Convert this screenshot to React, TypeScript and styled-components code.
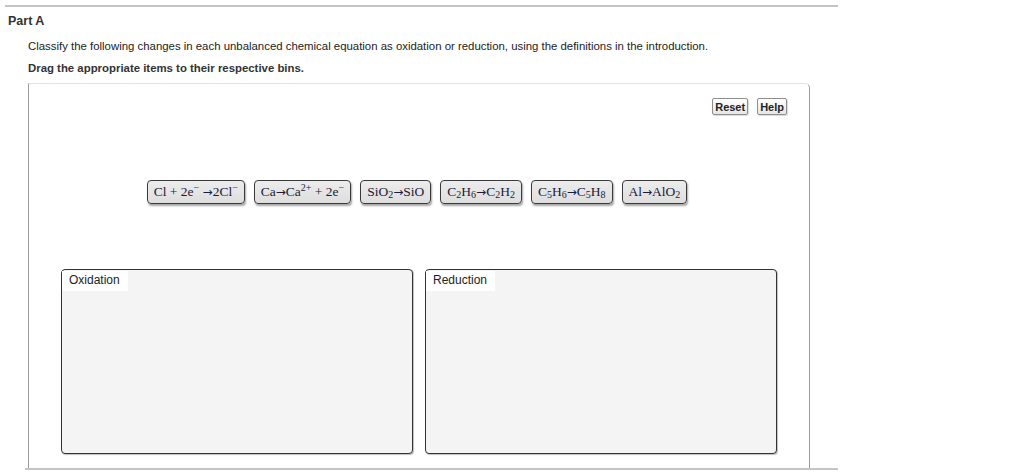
import React from "react";
import styled, { createGlobalStyle } from "styled-components";

const Global = createGlobalStyle`
  html, body { margin: 0; padding: 0; background: #fff; }
  body { font-family: "Liberation Sans", Arial, sans-serif; color: #222; }
`;

const Page = styled.div`
  width: 1021px;
  height: 474px;
  padding-top: 5px;
  box-sizing: border-box;
`;

const Rule = styled.div<{ $left: number; $width: number }>`
  margin-left: ${(p) => p.$left}px;
  width: ${(p) => p.$width}px;
  height: 2px;
  background: #c4c4c4;
`;

const PartTitle = styled.div`
  margin: 6px 0 0 8px;
  font-size: 12.5px;
  font-weight: bold;
  line-height: 16px;
  color: #333;
`;

const Body = styled.div`
  margin-left: 28px;
`;

const Instruction = styled.div`
  margin-top: 10px;
  font-size: 11.4px;
  line-height: 14px;
  color: #222;
`;

const Bold = styled.div`
  margin-top: 8px;
  font-size: 11.4px;
  line-height: 14px;
  font-weight: bold;
  color: #333;
`;

const Panel = styled.div`
  margin-top: 8px;
  width: 782px;
  box-sizing: border-box;
  border: 1px solid #9a9a9a;
  border-top-color: #e2e2e2;
  border-bottom: none;
  border-top-right-radius: 5px;
  padding: 14px 22px 14px 0;
  display: flex;
  flex-direction: column;
`;

const Toolbar = styled.div`
  display: flex;
  justify-content: flex-end;
  gap: 9px;
`;

const ToolButton = styled.button`
  height: 17px;
  padding: 0 2px;
  font-family: "Liberation Sans", Arial, sans-serif;
  font-size: 11px;
  font-weight: bold;
  color: #222;
  background: linear-gradient(#ffffff, #e6e6e6);
  border: 1px solid #8e8e8e;
  border-radius: 2px;
  box-shadow: 1px 1px 1px rgba(0, 0, 0, 0.15);
  line-height: 14px;
  cursor: pointer;
`;

const TileRow = styled.div`
  margin-top: 65px;
  display: flex;
  justify-content: center;
  gap: 9px;
  padding-left: 18px;
`;

const Tile = styled.div`
  height: 24px;
  box-sizing: border-box;
  padding: 0 6px;
  display: flex;
  align-items: center;
  font-family: "Liberation Serif", "Times New Roman", serif;
  font-size: 13.5px;
  color: #1a1a3a;
  white-space: nowrap;
  background: linear-gradient(#ececec, #dedede);
  border: 1.5px solid #3a3a3a;
  border-radius: 4px;
  box-shadow: 1px 2px 2px rgba(0, 0, 0, 0.35);
`;

const Formula = styled.span`
  line-height: 16px;
  sub, sup {
    font-size: 10px;
    line-height: 0;
  }
  sub { vertical-align: -2px; }
  sup { vertical-align: 5px; }
`;

const Arrow = styled.span`
  font-family: "DejaVu Sans", sans-serif;
  font-size: 12px;
`;

const BinRow = styled.div`
  margin-top: 65px;
  display: flex;
  justify-content: center;
  gap: 12px;
  padding-left: 22px;
`;

const Bin = styled.div`
  width: 352px;
  height: 185px;
  box-sizing: border-box;
  background: #f4f4f4;
  border: 1px solid #333;
  border-radius: 4px;
  box-shadow: 1px 1px 1px rgba(0, 0, 0, 0.25);
`;

const BinLabel = styled.div`
  display: inline-block;
  background: #fff;
  padding: 2px 8px 3px 7px;
  font-size: 12px;
  line-height: 15px;
  color: #222;
`;

const A = () => <Arrow>→</Arrow>;

const tiles: React.ReactNode[] = [
  <>Cl + 2e<sup>−</sup> <A />2Cl<sup>−</sup></>,
  <>Ca<A />Ca<sup>2+</sup> + 2e<sup>−</sup></>,
  <>SiO<sub>2</sub><A />SiO</>,
  <>C<sub>2</sub>H<sub>6</sub><A />C<sub>2</sub>H<sub>2</sub></>,
  <>C<sub>5</sub>H<sub>6</sub><A />C<sub>5</sub>H<sub>8</sub></>,
  <>Al<A />AlO<sub>2</sub></>,
];

export default function App() {
  return (
    <Page>
      <Global />
      <Rule $left={5} $width={833} />
      <PartTitle>Part A</PartTitle>
      <Body>
        <Instruction>
          Classify the following changes in each unbalanced chemical equation as oxidation or reduction, using the definitions in the introduction.
        </Instruction>
        <Bold>Drag the appropriate items to their respective bins.</Bold>
        <Panel>
          <Toolbar>
            <ToolButton>Reset</ToolButton>
            <ToolButton>Help</ToolButton>
          </Toolbar>
          <TileRow>
            {tiles.map((t, i) => (
              <Tile key={i}>
                <Formula>{t}</Formula>
              </Tile>
            ))}
          </TileRow>
          <BinRow>
            <Bin>
              <BinLabel>Oxidation</BinLabel>
            </Bin>
            <Bin>
              <BinLabel>Reduction</BinLabel>
            </Bin>
          </BinRow>
        </Panel>
      </Body>
      <Rule $left={25} $width={813} />
    </Page>
  );
}
